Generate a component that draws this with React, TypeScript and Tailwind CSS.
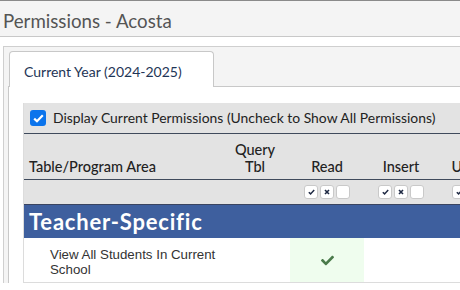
import { FaCheck } from 'react-icons/fa';

const COLS = 'grid grid-cols-[196px_70px_74px_74px_74px]';

function MiniBoxes() {
  return (
    <div className="flex items-center justify-center gap-[2px]">
      <span className="flex h-[14px] w-[14px] items-center justify-center rounded-[3px] border border-[#c9c9c9] bg-white">
        <svg width="7" height="6" viewBox="0 0 7 6">
          <path d="M0.8 3.2 L2.6 4.9 L6.2 1.1" fill="none" stroke="#1f2a44" strokeWidth="1.5" />
        </svg>
      </span>
      <span className="flex h-[14px] w-[14px] items-center justify-center rounded-[3px] border border-[#c9c9c9] bg-white">
        <svg width="6" height="6" viewBox="0 0 6 6">
          <path d="M1 1 L5 5 M5 1 L1 5" fill="none" stroke="#1f2a44" strokeWidth="1.6" />
        </svg>
      </span>
      <span className="h-[14px] w-[14px] rounded-[3px] border border-[#c9c9c9] bg-white" />
    </div>
  );
}

export default function App() {
  return (
    <div className="h-[290px] w-[460px] overflow-hidden bg-white font-['Lato',sans-serif]">
      <div className="h-[37px] border-b border-t border-b-[#c8c8c8] border-t-[#8a8a8a] bg-[#f4f4f4] pl-[3px] pt-[8px] text-[18.7px] leading-[24px] text-[#555]">
        Permissions - Acosta
      </div>

      <div className="ml-[3px] mt-[9px] w-[600px] border-l border-t border-[#cfcfcf] bg-[#f4f4f4]">
        <div className="flex pl-[5px] pt-[4px]">
          <div className="relative z-10 -mb-px h-[36px] w-[205px] rounded-t-[4px] border border-b-0 border-[#c8c8c8] bg-white pl-[14px] pt-[11px] text-[14px] leading-[18px] text-[#1e3556]">
            Current Year (2024-2025)
          </div>
        </div>

        <div className="ml-[4px] border-l border-t border-[#c8c8c8] bg-white pl-[14px] pt-[16px]">
          <div className="w-[540px] border-l border-[#dcdcdc]">
            <div className="flex h-[30px] items-center gap-[7px] bg-[#e3e3e3] pl-[6px] text-[13.9px] text-[#222]">
              <span className="flex h-[16px] w-[16px] items-center justify-center rounded-[3px] bg-[#0b74ec]">
                <svg width="11" height="9" viewBox="0 0 11 9">
                  <path d="M1.2 4.6 L4 7.3 L9.8 1.3" fill="none" stroke="white" strokeWidth="2.2" />
                </svg>
              </span>
              <span>Display Current Permissions (Uncheck to Show All Permissions)</span>
            </div>

            <div className={`${COLS} h-[47px] border-y border-[#3f4a5c] bg-[#e3e3e3] text-[14.5px] font-medium leading-[17px] text-[#222]`}>
              <div className="self-end pb-[4px] pl-[5px]">Table/Program Area</div>
              <div className="self-end pb-[4px] text-center">
                Query
                <br />
                Tbl
              </div>
              <div className="self-end pb-[4px] text-center">Read</div>
              <div className="self-end pb-[4px] text-center">Insert</div>
              <div className="self-end pb-[4px] text-center">Update</div>
            </div>

            <div className={`${COLS} h-[25px] items-center border-b border-[#3a4460] bg-[#e3e3e3]`}>
              <div />
              <div />
              <MiniBoxes />
              <MiniBoxes />
              <MiniBoxes />
            </div>

            <div className="h-[33px] bg-[#3e5f9e] pl-[5px] pt-[3px] text-[22px] font-bold leading-[27px] tracking-[0.8px] text-white">
              Teacher-Specific
            </div>

            <div className={`${COLS} h-[45px] border-b border-[#dcdcdc]`}>
              <div className="pl-[26px] pr-[2px] pt-[9px] font-['Liberation_Sans',sans-serif] text-[13.3px] leading-[15px] text-[#333]">
                View All Students In Current School
              </div>
              <div />
              <div className="flex items-center justify-center bg-[#effdee]">
                <FaCheck className="text-[13px] text-[#4a7a4a]" />
              </div>
              <div />
              <div />
            </div>
          </div>
        </div>
      </div>
    </div>
  );
}
